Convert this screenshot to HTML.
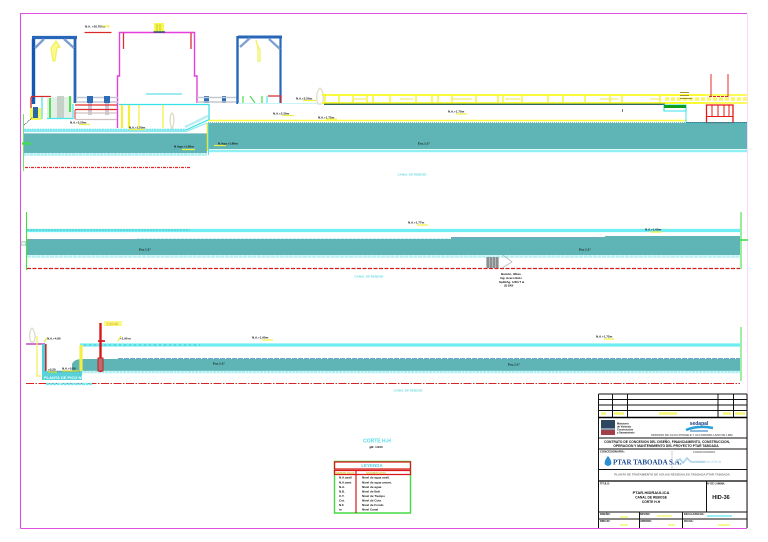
<!DOCTYPE html>
<html><head><meta charset="utf-8"><style>
html,body{margin:0;padding:0;background:#fff;width:768px;height:542px;overflow:hidden}
svg{display:block;font-family:"Liberation Sans",sans-serif;filter:blur(.3px)}
text{font-size:3px;fill:#111;font-weight:bold}
.c{fill:#5fd8e0;text-anchor:middle}
.m{text-anchor:middle}
</style></head><body>
<svg width="768" height="542" viewBox="0 0 768 542" fill="none">
<!-- border -->
<path d="M20.5 528.5V13.5H747" stroke="#e04fe0" stroke-width="1.100"/>
<path d="M747.5 13.5V528" stroke="#fbd8fb" stroke-width="1"/>

<!-- ===== SECTION 1 ===== -->
<path d="M23 134H207V153H23Z" fill="#5fb4b5"/>
<path d="M208 123H747V149H208Z" fill="#5fb4b5"/>
<path d="M23 131.500H186L207 123" stroke="#8ce8ee" stroke-width="1.200"/>
<path d="M24 129.500H186" stroke="#5ee6ee" stroke-width="1.400" stroke-dasharray="2 .6"/>
<path d="M23 133.500H207" stroke="#4a9aa8" stroke-width=".6"/>
<path d="M23 154.500H207" stroke="#a5eef2" stroke-width="2.600" stroke-dasharray="3 .5"/>
<path d="M208 151H747" stroke="#8ff0f4" stroke-width="2.600"/>
<path d="M208 122.500H747" stroke="#5f9fa8" stroke-width=".7" stroke-dasharray="1 1"/>
<path d="M208 120.500H686" stroke="#ffff40" stroke-width="1.500"/>
<path d="M207.500 123V151" stroke="#e5e83c" stroke-width="1.500"/>
<path d="M208.500 155V123" stroke="#49d5de" stroke-width=".8"/>
<path d="M25 167.500H190" stroke="#e02a2a" stroke-width="1.200" stroke-dasharray="3 1 1 1"/>
<path d="M23.500 114V171" stroke="#6ce66c" stroke-width="1"/>
<path d="M22 143.500H31" stroke="#45dc50" stroke-width="2.400"/>

<!-- left blue frame -->
<path d="M32 37.500H77" stroke="#2866b8" stroke-width="3.200"/>
<path d="M33.500 39V104" stroke="#1557b4" stroke-width="3.400"/>
<path d="M75 37V103" stroke="#2866b8" stroke-width="2.800"/>
<path d="M35 48L44 39M64 39L74 48" stroke="#7d9fd0" stroke-width="2.400"/>
<path d="M56 41L51 48 53 61H55L57 48 60 47Z" stroke="#f1f05a" stroke-width="1.200" fill="#fafa90"/>
<!-- building -->
<path d="M117.500 128V76H119.500V32.500H194.500V76H197V103" stroke="#e63fdc" stroke-width="1.400"/>
<path d="M123.500 33V49M191 33V49" stroke="#dd3030" stroke-width="1.300"/>
<path d="M154 23H164V32H154Z" fill="#f7f74c"/>
<path d="M157 24V31M160 24V31" stroke="#bbbb30" stroke-width=".8"/>
<path d="M153.500 32H165" stroke="#1b4d70" stroke-width="1.400"/>
<path d="M84.500 32.500H111.500" stroke="#d92a2a" stroke-width="1.200"/>
<text x="85" y="27.500">N.A. +20.700m</text>
<path d="M102 26H109L108 28" stroke="#eeee40" stroke-width="1"/>
<path d="M146 94H182" stroke="#8ee8ee" stroke-width="1.800"/>
<!-- low block left -->
<path d="M31 96.500H51M31 97V119" stroke="#db2828" stroke-width="1.300"/>
<path d="M42 97V119" stroke="#47dde5" stroke-width="1.200"/>
<path d="M47 97H72V119H47Z" fill="#e4efe8"/>
<path d="M50 98V118" stroke="#42de42" stroke-width="1.800"/>
<path d="M70 96V112" stroke="#42de42" stroke-width="1.800"/>
<path d="M57 96H64V118H57Z" fill="#c4d0c8"/>
<path d="M47 118.500H73V104" stroke="#4be5ec" stroke-width="1.300"/>
<path d="M30 108H41V120H30Z" fill="#f7f753"/>
<path d="M33 107H38V118H33Z" fill="#2a66aa"/>
<path d="M24 125L33 117" stroke="#333" stroke-width=".8" stroke-dasharray="1 1"/>
<!-- railings -->
<path d="M76 97.500H118M76 102H118" stroke="#c0c8d0" stroke-width="1.500"/>
<path d="M87 96H93V103H87ZM104 96H110V103H104Z" fill="#2f6cb8"/>
<path d="M88 103H92V115H88ZM105 103H109V115H105Z" fill="#ccd"/>
<path d="M75 105H117M75 109.500H117" stroke="#e02c2c" stroke-width="1.200"/>
<path d="M75 113H117M75 119.500H117" stroke="#d0c0c0" stroke-width="1.200"/>
<path d="M75 110V119" stroke="#e03030" stroke-width="1"/>
<!-- cyan under building -->
<path d="M119 104.500H209V119.500L186 130" stroke="#35e0e8" stroke-width="1.200"/>
<path d="M204 96H209V103H204ZM222 96H226V103H222Z" fill="#2f6cb8"/>
<path d="M197 97.500H238M197 102H238" stroke="#c0c8d0" stroke-width="1.400"/>
<path d="M122 105V128M129 105V128" stroke="#f3f03d" stroke-width="2.200"/>
<path d="M139 105V128M163 105V128" stroke="#f3f03d" stroke-width="1.200"/>
<path d="M172 113C169 116 170 125 172 129C174 125 175 116 172 113Z" stroke="#d8d8c0" stroke-width="1.200"/>
<path d="M185 127L208 116" stroke="#b8eef2" stroke-width="2.400"/>
<path d="M24 130.500H186" stroke="#8ee8ee" stroke-width="1.200"/>
<text x="70" y="123.500">N.A.+2.50m</text>
<path d="M79 124.500H90" stroke="#efef40" stroke-width="1.200"/>
<text x="129" y="128.500">N.A.+1.50m</text>
<path d="M129 129.500H145" stroke="#efef40" stroke-width="1.200"/>
<text x="174" y="147.500">N.Aga.+1.50m</text>
<path d="M182 149.500H195" stroke="#efef40" stroke-width="1.200"/>
<text x="218" y="144.500">N.Aga.+1.60m</text>
<path d="M214 145.500H226" stroke="#efef40" stroke-width="1.200"/>

<!-- second frame -->
<path d="M237.500 36V104" stroke="#2866b8" stroke-width="2.400"/>
<path d="M238 37H282" stroke="#2866b8" stroke-width="3"/>
<path d="M280.500 36V104" stroke="#2866b8" stroke-width="2.200"/>
<path d="M240 47L250 38M269 39L280 49" stroke="#7d9fd0" stroke-width="2.200"/>
<path d="M256 40L258 48V61H260V50L256 42" stroke="#f1f05a" stroke-width="1.200"/>
<path d="M243 96V103M250 96L255 103" stroke="#52de52" stroke-width="1.200"/>
<path d="M262 96V104" stroke="#42de42" stroke-width="1.200"/>
<path d="M267 96V104" stroke="#4be5ec" stroke-width="1.200"/>
<path d="M268 96H281V104" stroke="#db2c2c" stroke-width="1.200"/>
<path d="M238 103.500H318" stroke="#c7f4f6" stroke-width="1"/>
<text x="296" y="99.500">N.A.+2.50m</text>
<path d="M303 100.500H316" stroke="#efef40" stroke-width="1.200"/>
<text x="273" y="114.500">N.A.+2.30m</text>
<path d="M282 115.500H294" stroke="#efef40" stroke-width="1.200"/>
<text x="318" y="118.500">N.A.+1.75m</text>
<path d="M326 119H337" stroke="#efef40" stroke-width="1.200"/>
<text x="448" y="112.500">N.A.+1.75m</text>
<path d="M456 114H467" stroke="#efef40" stroke-width="1.200"/>
<path d="M320 88C316 92 316 100 318 104H322C324 100 324 92 320 88Z" stroke="#dcdcc0" stroke-width="1.200"/>
<!-- long railing -->
<path d="M322 95H705M322 103H705" stroke="#fafa20" stroke-width="1.800"/>
<path d="M324 104.300H665" stroke="#2f6a62" stroke-width="1.300"/>
<path d="M325 95V103M339 95V103M353 95V103M367 95V103M373 95V103M390 95V103M416 95V103M432 95V103M438 95V103M452 95V103M476 95V103M498 95V103M503 95V103M522 95V103M548 95V103M563 95V103M585 95V103M610 95V103M622 95V103M660 95V103" stroke="#f5f520" stroke-width="1.300"/>
<path d="M353 99H366M400 99H413M452 99H472M505 99H520M600 99H618M650 99H660" stroke="#e9e95a" stroke-width="1"/>
<path d="M665 95H747M665 103H747" stroke="#fafa20" stroke-width="1.500"/>
<path d="M665 99H747" stroke="#f8f860" stroke-width="3.400" stroke-dasharray="4 2"/>
<path d="M680 92.500H689M680 95.500H689M680 98.500H692" stroke="#a89030" stroke-width="1"/>
<path d="M711 74V97M728 74V97" stroke="#e64040" stroke-width="1.100"/>
<path d="M709 96.500H728" stroke="#d92a2a" stroke-width="1" stroke-dasharray="3 1"/>
<path d="M706.500 105H733V123H706.500Z" stroke="#e61818" stroke-width="1.300"/>
<path d="M706 116.500H733M712 105V116M718 105V116M724 105V116M729 105V116" stroke="#e61818" stroke-width="1"/>
<path d="M664 105H686V111H664Z" stroke="#35e0e8" stroke-width="1.100"/>
<path d="M664 105H686V108H664Z" fill="#0ca020"/>
<path d="M686 111V123H747" stroke="#35e0e8" stroke-width=".9"/>
<path d="M622 109H623V112H622Z" fill="#777"/>
<path d="M686 122.700H747" stroke="#266f80" stroke-width=".8"/>
<text x="418" y="144.500">Esc.1:1*</text>
<text class="c" x="412" y="175.500">CANAL DE REBOSE</text>

<!-- ===== SECTION 2 ===== -->
<path d="M27 240H137V239H451V238H605V236H740V255H27Z" fill="#5fb4b5"/>
<path d="M27 230.500H740" stroke="#6eeef3" stroke-width="3.200"/>
<path d="M27 230H190" stroke="#55b0b8" stroke-width=".8" stroke-dasharray="2 1"/>
<path d="M137 238.500H450" stroke="#c4f2f4" stroke-width="1" stroke-dasharray="3 1"/>
<path d="M27 239.500H137M451 237.500H605" stroke="#3f8fb0" stroke-width=".7"/>
<path d="M27 256.500H740" stroke="#b5f0f2" stroke-width="2.400" stroke-dasharray="4 .6"/>
<path d="M27 268.500H740" stroke="#cf1f1f" stroke-width="1.200" stroke-dasharray="4 1.500"/>
<path d="M26.500 212V270M741 212V269" stroke="#45de45" stroke-width="1.100"/>
<path d="M21 242H26V245H21ZM26 240H32" stroke="#78b888" stroke-width=".8"/>
<path d="M740 240H748" stroke="#45de45" stroke-width="1.600"/>
<path d="M486 257H499V268H486Z" fill="#b5bcb8"/>
<path d="M488 257V268M491 257V268M494 257V268M497 257V268" stroke="#556" stroke-width=".9"/>
<path d="M503 255L512 262 502 268" stroke="#aaa" stroke-width=".7"/>
<text x="501" y="275">Bastón, tilbao</text>
<text x="500" y="279">Ing. Acero Bols</text>
<text x="499" y="283">Split/Ag. 1/3Cr7 &amp;</text>
<text x="504" y="286.500" style="font-size:2.500px">(2) 3000</text>
<text x="139" y="250.500">Esc.1:1*</text>
<text x="579" y="250.500">Esc.1:1*</text>
<text x="408" y="223.500">N.A.+1.77m</text>
<path d="M417 225H428" stroke="#efef40" stroke-width="1.200"/>
<text x="645" y="230.500">N.A.+1.69m</text>
<path d="M650 232H662" stroke="#efef40" stroke-width="1.200"/>
<text class="c" x="369" y="277.500">CANAL DE REBOSE</text>

<!-- ===== SECTION 3 ===== -->
<path d="M72 371V364Q74 359 82 359H740V356H740V371Z" fill="#5fb4b5"/>
<path d="M80 345H740" stroke="#6eeef3" stroke-width="3.200"/>
<path d="M84 345H200" stroke="#52a8b0" stroke-width=".7" stroke-dasharray="2 3"/>
<path d="M118 358.500H740" stroke="#6fa5d0" stroke-width=".9" stroke-dasharray="5 1"/>
<path d="M80 372H740" stroke="#aeeff2" stroke-width="2.400" stroke-dasharray="3 .6"/>
<path d="M26 383.500H740" stroke="#d42424" stroke-width="1.100" stroke-dasharray="8 1.500 1.500 1.500"/>
<path d="M741 327V381" stroke="#45de45" stroke-width="1"/>
<path d="M26 344H45" stroke="#c048c0" stroke-width="1.600"/>
<path d="M37 336V376H41" stroke="#f3f050" stroke-width="1.200"/>
<path d="M45.500 344V373" stroke="#d92020" stroke-width="2.200"/>
<path d="M42 344H45V378H42Z" fill="#48d4da"/>
<path d="M42 371H82V380H42Z" fill="#58d2d6"/>
<path d="M48 371.500H80" stroke="#5fa8b8" stroke-width="1.500"/>
<text x="44" y="379" style="fill:#eff;font-size:4px">PLANTA DE PICO NIV</text>
<path d="M46 384H92" stroke="#6ee8ee" stroke-width="2.200" stroke-dasharray="3 .6"/>
<path d="M81 345V371" stroke="#f2f040" stroke-width="3.200"/>
<path d="M48 372H57M62 371H79" stroke="#d0e030" stroke-width="1.200"/>
<path d="M100.500 323V372" stroke="#d81818" stroke-width="2.400"/>
<path d="M98 358H103V371H98Z" stroke="#c22020" stroke-width="1" fill="#c06b70"/>
<path d="M98 341H105" stroke="#d81818" stroke-width="1.700"/>
<path d="M104 321H122V326H104Z" fill="#fafa88"/>
<text x="106" y="325.500" style="fill:#e0c830;font-size:4.500px">10040</text>
<path d="M32 328C29 331 29 338 31 342H34C36 338 35 331 32 328Z" stroke="#d8d8c8" stroke-width="1.200"/>
<text x="47" y="339.500">N.A.+4.80</text>
<path d="M44 342L47 338" stroke="#e5e540" stroke-width="1.200"/>
<text x="120" y="339.500">+1.90 m</text>
<path d="M118 341L121 336" stroke="#e5e540" stroke-width="1.200"/>
<text x="48" y="370.500">+0.20</text>
<text x="62" y="369.500">N.A.+0.85</text>
<text x="213" y="364.500">Esc.1:1*</text>
<text x="508" y="365.500">Esc.1:1*</text>
<text x="252" y="338.500">N.A.+1.90m</text>
<path d="M262 340H273" stroke="#efef40" stroke-width="1.200"/>
<text x="596" y="337.500">N.A.+1.72m</text>
<path d="M604 339H614" stroke="#efef40" stroke-width="1.200"/>
<text class="c" x="408" y="391.500">CANAL DE REBOSE</text>

<!-- ===== CORTE + LEGEND ===== -->
<text x="377" y="442.500" style="fill:#50dcea;font-size:5px;text-anchor:middle">CORTE H-H</text>
<text x="376" y="448" class="m">gB: 1/100</text>
<path d="M334.500 461.500H410.500V513H334.500Z" stroke="#45d845" stroke-width="1.400"/>
<path d="M334.500 462H410.500V469H334.500ZM334.500 470.500H410.500V474.500H334.500Z" stroke="#d91818" stroke-width="1.200"/>
<path d="M356 470V513" stroke="#d91818" stroke-width="1.200"/>
<text x="372" y="466.800" style="fill:#50cfe0;font-size:4.500px;text-anchor:middle">LEYENDA</text>
<text x="345" y="473.800" class="m" style="fill:#cdbb20">SIMBOLOGIA</text>
<text x="376" y="473.800" class="m" style="fill:#cdbb20">SIGNIFICADO</text>
<g>
<text x="339" y="478.500">N.A.avall</text><text x="362" y="478.500">Nivel de agua avall.</text>
<text x="339" y="483.500">N.A.amtt</text><text x="362" y="483.500">Nivel de agua amont.</text>
<text x="339" y="488">N.A.</text><text x="362" y="488">Nivel de agua</text>
<text x="339" y="492.500">N.B.</text><text x="362" y="492.500">Nivel de Bnlt</text>
<text x="339" y="497">C.T.</text><text x="362" y="497">Nivel de Tiempo</text>
<text x="339" y="501.500">Cot.</text><text x="362" y="501.500">Nivel de Cota</text>
<text x="339" y="506">N.F.</text><text x="362" y="506">Nivel de Fondo</text>
<text x="339" y="510.500">m</text><text x="362" y="510.500">Nivel Canal</text>
</g>

<!-- ===== TITLE BLOCK ===== -->
<path d="M598.500 394H747M598.500 399.500H747M598.500 405H747M598.500 410.500H747" stroke="#111" stroke-width="1"/>
<path d="M598.500 417.500H747" stroke="#000" stroke-width="1.600"/>
<path d="M598.500 438H747M598.500 449H747M598.500 469.500H747" stroke="#111" stroke-width="1"/>
<path d="M598.500 481H747" stroke="#000" stroke-width="1.200"/>
<path d="M598.500 512H747M598.500 519H747" stroke="#111" stroke-width="1"/>
<path d="M598.500 394V528M747 394V528" stroke="#111" stroke-width="1"/>
<path d="M612.500 394V417M627.500 394V417M718 394V417M733.500 394V417" stroke="#111" stroke-width="1"/>
<path d="M706.500 481V512M639.500 512V528M682.500 512V528" stroke="#111" stroke-width="1"/>
<path d="M672 449V469" stroke="#c8d0d8" stroke-width=".9"/>
<path d="M20.500 528.500H747" stroke="#e04fe0" stroke-width="1.100"/>
<path d="M601 413.500H606M614 413.500H624M659 413.500H677M723 413.500H731M735 413.500H745" stroke="#f5f570" stroke-width="2.400"/>
<path d="M601 420H615V435H601Z" fill="#8a9aa8"/>
<path d="M601 420H615V428H601Z" fill="#2c4860"/>
<path d="M601 430H615V435H601Z" fill="#a0404a"/>
<text x="617" y="424.500" style="font-size:2.500px">Ministerio</text>
<text x="617" y="427.500" style="font-size:2.500px">de Vivienda</text>
<text x="617" y="430.500" style="font-size:2.500px">Construcción</text>
<text x="617" y="433.500" style="font-size:2.500px">y Saneamiento</text>
<text x="699" y="425" style="fill:#1f3f80;font-size:5px;text-anchor:middle">sedapal</text>
<path d="M686 430Q698 425 713 428" stroke="#2aa0d8" stroke-width="2.500"/>
<path d="M690 431H708" stroke="#1c70b8" stroke-width="1"/>
<text x="692" y="436" class="m" style="font-size:2.800px;fill:#666">SERVICIO DE AGUA POTABLE Y ALCANTARILLADO DE LIMA</text>
<text x="667" y="443" class="m" style="font-size:3.300px">CONTRATO DE CONCESION DEL DISEÑO, FINANCIAMIENTO, CONSTRUCCION,</text>
<text x="666" y="447" class="m" style="font-size:3.300px">OPERACION Y MANTENIMIENTO DEL PROYECTO PTAR TABOADA</text>
<text x="600" y="452.500" style="font-size:2.800px">CONCESIONARIA:</text>
<path d="M608 456C604 461 603 465 608 466C613 465 612 461 608 456Z" fill="#2b8fd0"/>
<text x="613" y="464.500" style="font-family:'Liberation Serif',serif;font-size:7px;fill:#1f4c90">PTAR TABOADA S.A.</text>
<text x="704" y="453" class="m" style="font-size:2.600px;fill:#777">CONCESIONARIO</text>
<path d="M675 462L680 459 683 463 687 458 691 462H705" stroke="#a8cfe8" stroke-width="1.500"/>
<text x="694" y="463" style="fill:#bcdcec;font-size:3.500px">ACCIONA AGUA</text>
<text x="672" y="475.500" class="m" style="font-size:3px;fill:#777">PLANTA DE TRATAMIENTO DE AGUAS RESIDUALES TABOADA PTAR TABOADA</text>
<text x="600" y="484.500" style="font-size:2.500px">TITULO:</text>
<text x="707" y="484.500" style="font-size:2.500px">Nº DE LAMINA:</text>
<text x="651" y="494" class="m" style="font-size:4px">PTAR-HIDRAULICA</text>
<text x="651" y="498.500" class="m" style="font-size:3.300px">CANAL DE REBOSE</text>
<text x="651" y="503" class="m" style="font-size:3.300px">CORTE H-H</text>
<text x="721" y="499" class="m" style="font-size:5.500px">HID-36</text>
<text x="600" y="515" style="font-size:2.500px">DISEÑO:</text>
<text x="640" y="515" style="font-size:2.500px">REVISO:</text>
<text x="684" y="515" style="font-size:2.500px">ESCALA/FECHA:</text>
<text x="600" y="522" style="font-size:2.500px">DIBUJO:</text>
<text x="640" y="522" style="font-size:2.500px">APROBO:</text>
<text x="684" y="522" style="font-size:2.500px">FECHA:</text>
<path d="M620 517H628M657 516H672M620 525H628M668 525H675M718 525H730" stroke="#f5f570" stroke-width="1.500"/>
<path d="M707 516H732" stroke="#7be8f2" stroke-width="1.500"/>
</svg>
</body></html>
